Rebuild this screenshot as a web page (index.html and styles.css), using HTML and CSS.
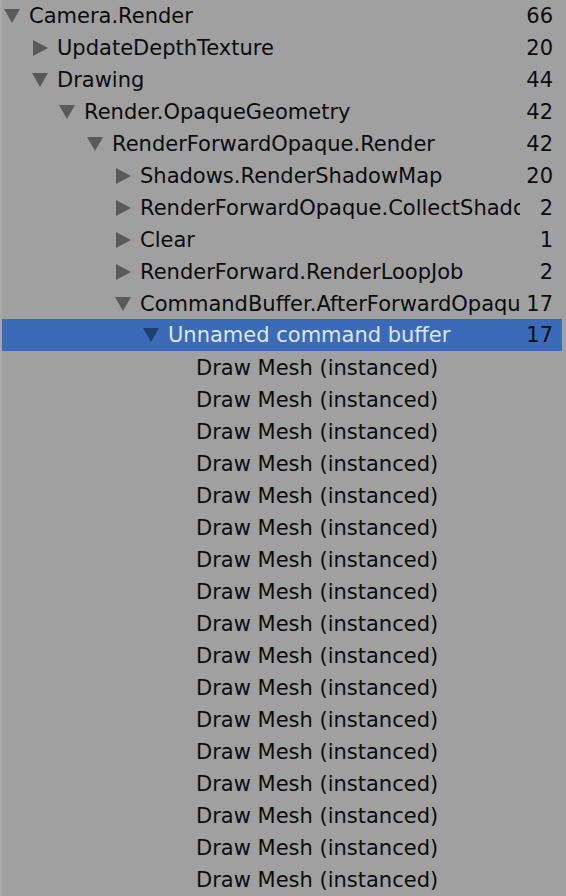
FILE: index.html
```html
<!DOCTYPE html>
<html>
<head>
<meta charset="utf-8">
<link rel="stylesheet" href="styles.css">
</head>
<body>
<div class="tree">
  <div class="row l0"><span class="tog down"></span><span class="name">Camera.Render</span><span class="num">66</span></div>
  <div class="row l1"><span class="tog right"></span><span class="name">UpdateDepthTexture</span><span class="num">20</span></div>
  <div class="row l1"><span class="tog down"></span><span class="name">Drawing</span><span class="num">44</span></div>
  <div class="row l2"><span class="tog down"></span><span class="name">Render.OpaqueGeometry</span><span class="num">42</span></div>
  <div class="row l3"><span class="tog down"></span><span class="name">RenderForwardOpaque.Render</span><span class="num">42</span></div>
  <div class="row l4"><span class="tog right"></span><span class="name">Shadows.RenderShadowMap</span><span class="num">20</span></div>
  <div class="row l4"><span class="tog right"></span><span class="name">RenderForwardOpaque.CollectShadows</span><span class="num">2</span></div>
  <div class="row l4"><span class="tog right"></span><span class="name">Clear</span><span class="num">1</span></div>
  <div class="row l4"><span class="tog right"></span><span class="name">RenderForward.RenderLoopJob</span><span class="num">2</span></div>
  <div class="row l4"><span class="tog down"></span><span class="name">CommandBuffer.AfterForwardOpaque</span><span class="num">17</span></div>
  <div class="row l5 selected"><span class="tog down"></span><span class="name">Unnamed command buffer</span><span class="num">17</span></div>
  <div class="row l6"><span class="tog none"></span><span class="name">Draw Mesh (instanced)</span><span class="num"></span></div>
  <div class="row l6"><span class="tog none"></span><span class="name">Draw Mesh (instanced)</span><span class="num"></span></div>
  <div class="row l6"><span class="tog none"></span><span class="name">Draw Mesh (instanced)</span><span class="num"></span></div>
  <div class="row l6"><span class="tog none"></span><span class="name">Draw Mesh (instanced)</span><span class="num"></span></div>
  <div class="row l6"><span class="tog none"></span><span class="name">Draw Mesh (instanced)</span><span class="num"></span></div>
  <div class="row l6"><span class="tog none"></span><span class="name">Draw Mesh (instanced)</span><span class="num"></span></div>
  <div class="row l6"><span class="tog none"></span><span class="name">Draw Mesh (instanced)</span><span class="num"></span></div>
  <div class="row l6"><span class="tog none"></span><span class="name">Draw Mesh (instanced)</span><span class="num"></span></div>
  <div class="row l6"><span class="tog none"></span><span class="name">Draw Mesh (instanced)</span><span class="num"></span></div>
  <div class="row l6"><span class="tog none"></span><span class="name">Draw Mesh (instanced)</span><span class="num"></span></div>
  <div class="row l6"><span class="tog none"></span><span class="name">Draw Mesh (instanced)</span><span class="num"></span></div>
  <div class="row l6"><span class="tog none"></span><span class="name">Draw Mesh (instanced)</span><span class="num"></span></div>
  <div class="row l6"><span class="tog none"></span><span class="name">Draw Mesh (instanced)</span><span class="num"></span></div>
  <div class="row l6"><span class="tog none"></span><span class="name">Draw Mesh (instanced)</span><span class="num"></span></div>
  <div class="row l6"><span class="tog none"></span><span class="name">Draw Mesh (instanced)</span><span class="num"></span></div>
  <div class="row l6"><span class="tog none"></span><span class="name">Draw Mesh (instanced)</span><span class="num"></span></div>
  <div class="row l6"><span class="tog none"></span><span class="name">Draw Mesh (instanced)</span><span class="num"></span></div>
</div>
</body>
</html>
```

FILE: styles.css
```css
html, body {
  margin: 0;
  padding: 0;
  background: #a0a0a0;
  overflow: hidden;
}
body {
  width: 566px;
  height: 896px;
  font-family: "DejaVu Sans", Verdana, sans-serif;
  font-size: 21px;
  color: #0c0c0c;
}
.tree {
  margin-top: 0;
  margin-left: 2px;
  width: 560px;
  box-shadow: -2px 0 0 #a9a9a9;
}
.row {
  display: flex;
  align-items: center;
  height: 32px;
  white-space: nowrap;
}
.row.selected {
  margin-top: -1px;
  margin-bottom: 1px;
  background: #3b6bb8;
  color: #dfe6ef;
}
.row.selected .num { color: #0c0c0c; }
.tog {
  flex: 0 0 auto;
  width: 16px;
  height: 16px;
  margin-right: 9px;
  position: relative;
}
.tog.down::before {
  content: "";
  position: absolute;
  left: 0; top: 1px;
  border-left: 8px solid transparent;
  border-right: 8px solid transparent;
  border-top: 14px solid #5a5a5a;
}
.tog.right::before {
  content: "";
  position: absolute;
  left: 1px; top: 0;
  border-top: 8px solid transparent;
  border-bottom: 8px solid transparent;
  border-left: 15px solid #5a5a5a;
}
.selected .tog.down::before { border-top-color: #203f6c; }
.name {
  flex: 1 1 auto;
  overflow: hidden;
  min-width: 0;
}
.num {
  flex: 0 0 33px;
  text-align: right;
  padding-right: 9px;
}
.l0 { padding-left: 2px; }
.l1 { padding-left: 30px; }
.l2 { padding-left: 57px; }
.l3 { padding-left: 85px; }
.l4 { padding-left: 113px; }
.l5 { padding-left: 141px; }
.l6 { padding-left: 169px; }
```
